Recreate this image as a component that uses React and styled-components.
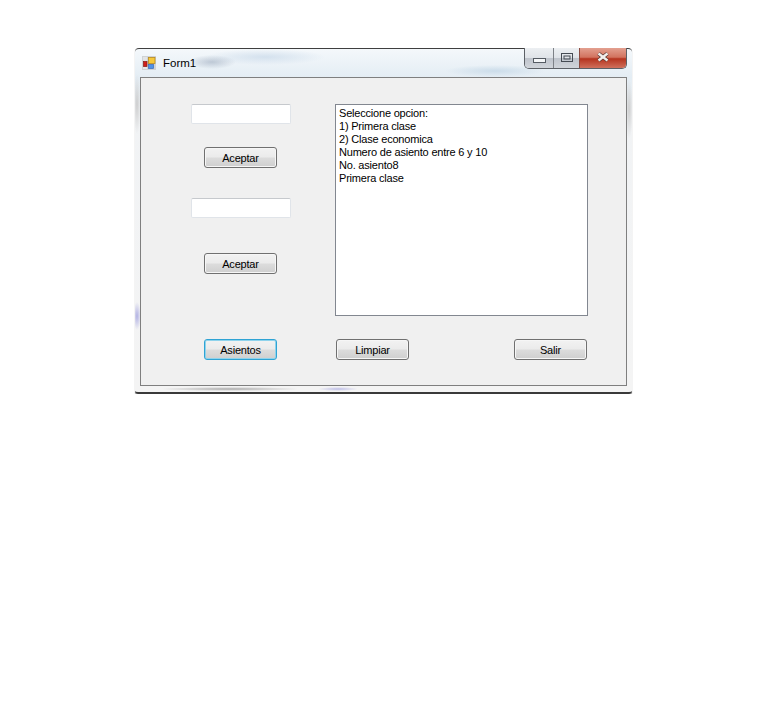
import React from 'react';
import styled, { createGlobalStyle } from 'styled-components';

const Global = createGlobalStyle`
  html, body {
    margin: 0;
    padding: 0;
    background: #fff;
    font-family: "Liberation Sans", Arial, sans-serif;
  }
`;

const Win = styled.div`
  box-sizing: border-box;
  width: 497px;
  height: 346px;
  margin: 48px 0 0 135px;
  display: flex;
  flex-direction: column;
  border-top: 1px solid #3f3f3f;
  border-bottom: 2px solid #3a3a3a;
  border-radius: 4px 4px 3px 3px;
  box-shadow: 0 1px 1px #8a8a8a;
  background:
    radial-gradient(ellipse 24px 7px at 77px 13px, rgba(150, 165, 185, 0.55), transparent),
    radial-gradient(ellipse 60px 8px at 130px 8px, rgba(205, 220, 235, 0.8), transparent),
    radial-gradient(ellipse 50px 6px at 360px 22px, rgba(200, 218, 232, 0.9), transparent),
    radial-gradient(ellipse 70px 2px at 95px 340px, rgba(120, 120, 120, 0.6), transparent),
    radial-gradient(ellipse 20px 2px at 203px 340px, rgba(150, 150, 220, 0.6), transparent),
    radial-gradient(ellipse 4px 14px at 2px 267px, rgba(170, 170, 225, 0.9), transparent),
    radial-gradient(ellipse 4px 30px at 2px 55px, rgba(190, 190, 190, 0.7), transparent),
    radial-gradient(ellipse 4px 30px at 494px 60px, rgba(190, 190, 190, 0.7), transparent),
    linear-gradient(#f4f8fb, #e4edf4 28px, #f1f3f5 60px, #f4f4f4);
`;

const TitleBar = styled.div`
  position: relative;
  height: 28px;
  flex: none;
  display: flex;
  align-items: center;
  padding-left: 7px;
  gap: 7px;
  font-size: 11.5px;
  color: #000;
`;

const Caption = styled.div`
  position: absolute;
  top: -1px;
  right: 5px;
  display: flex;
  height: 20px;
  border: 1px solid #5c6066;
  border-top: none;
  border-radius: 0 0 5px 5px;
  overflow: hidden;
`;

const CaptionBtn = styled.div`
  width: ${p => p.$w}px;
  display: flex;
  justify-content: center;
  align-items: flex-start;
  padding-top: ${p => p.$pad}px;
  box-sizing: content-box;
  height: calc(100% - ${p => p.$pad}px);
  border-left: ${p => (p.$first ? 'none' : '1px solid #7d8187')};
  background: linear-gradient(#eceff2, #dfe3e8 48%, #bfc4cc 52%, #d0d4da);
`;

const CloseBtn = styled(CaptionBtn)`
  border-left: 1px solid #8a4a40;
  background: linear-gradient(#e3a090, #d2735f 46%, #b5341f 54%, #d0705c);
`;

const Client = styled.div`
  box-sizing: border-box;
  flex: none;
  height: 309px;
  margin: 0 5px;
  padding: 26px 0 0 50px;
  background: #f0f0f0;
  border: 1px solid #7f7f7f;
`;

const TopRow = styled.div`
  display: flex;
  gap: 44px;
`;

const Col = styled.div`
  display: flex;
  flex-direction: column;
  align-items: flex-start;
  width: 100px;
`;

const TextBox = styled.div`
  box-sizing: border-box;
  width: 100px;
  height: 20px;
  flex: none;
  background: #fff;
  border: 1px solid #e0e4e9;
  border-top-color: #c6c9cd;
  border-radius: 2px;
  margin-top: ${p => p.$top || 0}px;
`;

const Button = styled.div`
  box-sizing: border-box;
  width: 73px;
  height: 21px;
  flex: none;
  display: flex;
  align-items: center;
  justify-content: center;
  font-size: 11px;
  letter-spacing: -0.2px;
  color: #000;
  border: 1px solid ${p => (p.$focus ? '#2fa3d4' : '#707070')};
  border-radius: 3px;
  box-shadow: inset 0 0 0 1px ${p => (p.$focus ? '#8fd3ec' : '#f6f6f6')};
  background: linear-gradient(#f2f2f2, #ebebeb 48%, #dcdcdc 52%, #cfcfcf);
  margin-top: ${p => p.$top || 0}px;
  margin-left: ${p => p.$left || 0}px;
`;

const ListBox = styled.div`
  box-sizing: border-box;
  width: 253px;
  height: 212px;
  flex: none;
  padding: 2px 3px;
  background: #fff;
  border: 1px solid #828790;
  font-size: 11px;
  letter-spacing: -0.2px;
  line-height: 13px;
  color: #000;
  white-space: pre;
`;

const BottomRow = styled.div`
  display: flex;
  margin-top: 23px;
`;

const lines = [
  'Seleccione opcion:',
  '1) Primera clase',
  '2) Clase economica',
  'Numero de asiento entre 6 y 10',
  'No. asiento8',
  'Primera clase'
];

const AppIcon = () => (
  <svg width="14" height="14" viewBox="0 0 14 14">
    <rect x="0" y="0" width="14" height="14" fill="#cfd2d4" />
    <rect x="1" y="1" width="4" height="4" fill="#e2e4e5" />
    <rect x="1" y="11" width="4" height="2" fill="#e8e8e8" />
    <rect x="1.5" y="5.5" width="3.5" height="5" fill="#d1201a" stroke="#8a1c16" strokeWidth="0.7" />
    <rect x="6.5" y="1.5" width="6.5" height="6" fill="#f6c83a" stroke="#b78a20" strokeWidth="0.8" />
    <rect x="6.5" y="8.5" width="5" height="4" fill="#4f92e6" stroke="#3a6cb8" strokeWidth="0.7" />
  </svg>
);

const App = () => (
  <>
    <Global />
    <Win>
      <TitleBar>
        <AppIcon />
        <span>Form1</span>
        <Caption>
          <CaptionBtn $w={28} $first $pad={10}>
            <svg width="13" height="5" viewBox="0 0 13 5">
              <rect x="0.5" y="0.5" width="12" height="4" fill="#f4f6f8" stroke="#555b63" />
            </svg>
          </CaptionBtn>
          <CaptionBtn $w={25} $pad={5}>
            <svg width="12" height="9" viewBox="0 0 12 9">
              <rect x="0.5" y="0.5" width="11" height="8" fill="none" stroke="#454b53" />
              <rect x="3" y="3" width="6" height="3" fill="none" stroke="#454b53" />
            </svg>
          </CaptionBtn>
          <CloseBtn $w={46} $pad={4}>
            <svg width="14" height="10" viewBox="0 0 14 10">
              <path d="M2.5 1.5 L11.5 8.5 M11.5 1.5 L2.5 8.5" stroke="#5a3a34" strokeWidth="3.8" />
              <path d="M2.5 1.5 L11.5 8.5 M11.5 1.5 L2.5 8.5" stroke="#f2f0ee" strokeWidth="2.4" />
            </svg>
          </CloseBtn>
        </Caption>
      </TitleBar>
      <Client>
        <TopRow>
          <Col>
            <TextBox />
            <Button $top={23} $left={13}>Aceptar</Button>
            <TextBox $top={30} />
            <Button $top={35} $left={13}>Aceptar</Button>
          </Col>
          <ListBox>{lines.join('\n')}</ListBox>
        </TopRow>
        <BottomRow>
          <Button $left={13} $focus>Asientos</Button>
          <Button $left={59}>Limpiar</Button>
          <Button $left={105}>Salir</Button>
        </BottomRow>
      </Client>
    </Win>
  </>
);

export default App;
